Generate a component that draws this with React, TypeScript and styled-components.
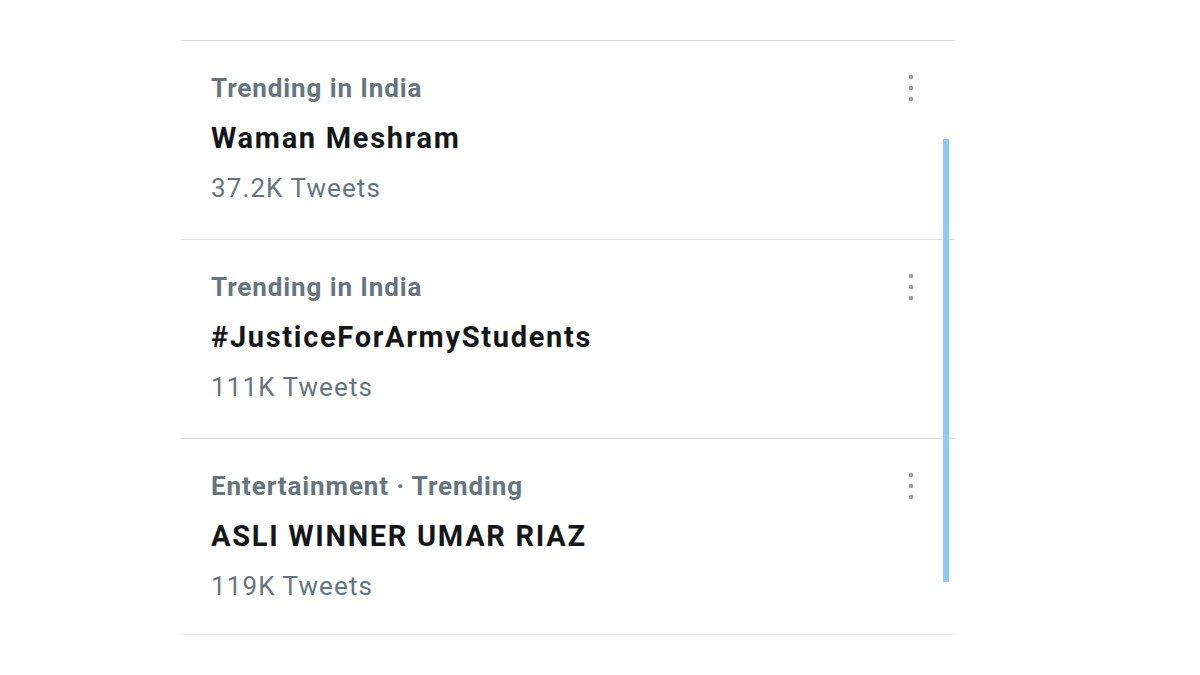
import styled, { createGlobalStyle } from "styled-components";

const Global = createGlobalStyle`
  html, body {
    margin: 0;
    padding: 0;
    background: #ffffff;
  }
  body {
    font-family: Roboto, "Noto Sans", "Liberation Sans", sans-serif;
  }
`;

const Page = styled.div`
  width: 1200px;
  height: 675px;
  box-sizing: border-box;
  padding: 40px 0 0 181px;
  background: #ffffff;
`;

const Panel = styled.div`
  position: relative;
  width: 774px;
  border-top: 1px solid #d9dde0;
`;

const Row = styled.div<{ last?: boolean }>`
  display: flex;
  justify-content: space-between;
  box-sizing: border-box;
  height: ${(p) => (p.last ? "196px" : "199px")};
  padding: 22px 0 0 30px;
  border-bottom: 1px solid ${(p) => (p.last ? "#f1f3f4" : "#dde1e4")};
`;

const Texts = styled.div`
  display: flex;
  flex-direction: column;
`;

const Category = styled.div`
  font-size: 26px;
  line-height: 50px;
  font-weight: 700;
  letter-spacing: 0.9px;
  color: #66757f;
`;

const Title = styled.div`
  font-size: 29px;
  line-height: 50px;
  font-weight: 700;
  letter-spacing: 1.7px;
  color: #14171a;
`;

const Count = styled.div`
  font-size: 26px;
  line-height: 50px;
  font-weight: 400;
  letter-spacing: 1.1px;
  color: #66757f;
`;

const More = styled.div`
  width: 8px;
  margin: 12px 40px 0 0;
  display: flex;
  flex-direction: column;
  align-items: center;
  gap: 7px;
`;

const Dot = styled.span`
  width: 4px;
  height: 4px;
  border-radius: 1px;
  background: #9a9fa4;
`;

const Scrollbar = styled.div`
  position: absolute;
  right: 6px;
  top: 98px;
  width: 6px;
  height: 443px;
  background: #8ec9f4;
`;

const trends = [
  { category: "Trending in India", title: "Waman Meshram", count: "37.2K Tweets" },
  { category: "Trending in India", title: "#JusticeForArmyStudents", count: "111K Tweets" },
  { category: "Entertainment · Trending", title: "ASLI WINNER UMAR RIAZ", count: "119K Tweets" },
];

function App() {
  return (
    <Page>
      <Global />
      <Panel>
        {trends.map((t, i) => (
          <Row key={i} last={i === trends.length - 1}>
            <Texts>
              <Category>{t.category}</Category>
              <Title>{t.title}</Title>
              <Count>{t.count}</Count>
            </Texts>
            <More>
              <Dot />
              <Dot />
              <Dot />
            </More>
          </Row>
        ))}
        <Scrollbar />
      </Panel>
    </Page>
  );
}

export default App;
